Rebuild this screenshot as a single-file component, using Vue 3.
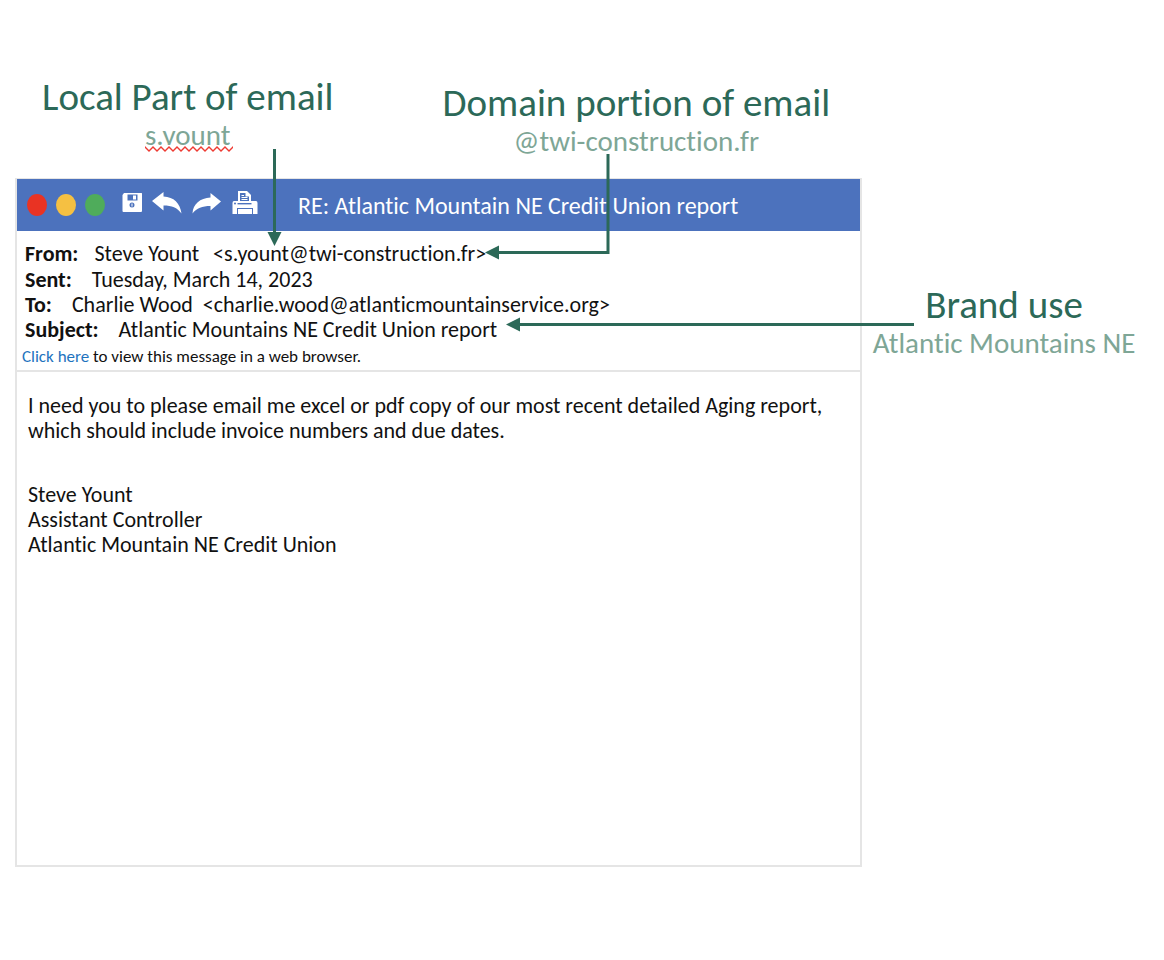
<template>
    <div class="diagram">
        <div class="callouts">
            <div class="callout local">
                <h2>Local Part of email</h2>
                <p class="misspelt">
                    <span>s.yount</span>
                    <svg class="wave" aria-hidden="true">
                        <defs>
                            <pattern id="zigzag" width="8" height="6" patternUnits="userSpaceOnUse">
                                <path d="M-1 0 L0 1 L4 5 L8 1 L9 0" fill="none" stroke="#ee3a32" stroke-width="1.4" />
                            </pattern>
                        </defs>
                        <rect width="100%" height="6" fill="url(#zigzag)" />
                    </svg>
                </p>
            </div>
            <div class="callout domain">
                <h2>Domain portion of email</h2>
                <p>@twi-construction.fr</p>
            </div>
        </div>
        <main class="mail">
            <header class="bar">
                <div class="lights">
                    <button v-for="item in lights" :key="item" :class="item" :aria-label="item"></button>
                </div>
                <div class="tools">
                    <button aria-label="Save">
                        <svg width="20" height="20" viewBox="0 0 20 20">
                            <path fill="#fff" fill-rule="evenodd" d="M2 0H19.500Q20 0 20 .5V18Q20 19 19 19H1.500Q.5 19 .5 18V2ZM5.500 1.500V7.500H15.500V1.500ZM10 9.500A2.500 2.500 0 1 0 10 14.500A2.500 2.500 0 1 0 10 9.500Z" />
                            <path fill="#fff" d="M11 2.500h3v4h-3zM9.500 10.500h1v3h-1z" />
                        </svg>
                    </button>
                    <button aria-label="Reply">
                        <svg width="30" height="22" viewBox="0 0 30 22">
                            <path fill="#fff" d="M0 9 L11.500 0 V4.500 C22 5 28 11 29.500 21.500 C25 15.500 20 13.500 11.500 13.500 V18.500 Z" />
                        </svg>
                    </button>
                    <button aria-label="Forward">
                        <svg width="30" height="22" viewBox="0 0 30 22">
                            <path fill="#fff" d="M29 9.500 L18.500 1 V5.500 C8 6 1 12 .5 21.500 C5 16 10 14 18.500 14 V18.500 Z" />
                        </svg>
                    </button>
                    <button aria-label="Print">
                        <svg width="26" height="24" viewBox="0 0 26 24">
                            <path fill="#fff" fill-rule="evenodd" d="M6 0H15L19 4V10H24Q25.500 10 25.500 12V23H21V17H5V23H.5V12Q.5 10 2 10H6ZM8 2V10H17V5.500H13.500V2Z" />
                            <path fill="none" stroke="#fff" d="M9.500 4.500h2.500M9.500 6.500h6M9.500 8.500h6" />
                            <path fill="none" stroke="#4c72bd" stroke-width="1.400" d="M5.500 12.700H19.500" />
                            <path fill="#fff" d="M6 18h14V23H6z" />
                            <circle cx="3" cy="12.500" r="1" fill="#4c72bd" />
                        </svg>
                    </button>
                </div>
                <h1>RE: Atlantic Mountain NE Credit Union report</h1>
            </header>
            <section class="head">
                <dl>
                    <div v-for="item in fields" :key="item.label" :class="item.name">
                        <dt>{{ item.label }}</dt>
                        <dd>{{ item.value }} <span v-if="item.address">{{ item.address }}</span></dd>
                    </div>
                </dl>
                <p class="browser"><a href="#">Click here</a> to view this message in a web browser.</p>
            </section>
            <section class="body">
                <p>I need you to please email me excel or pdf copy of our most recent detailed Aging report,<br>
                    which should include invoice numbers and due dates.</p>
                <p class="sign">Steve Yount<br>Assistant Controller<br>Atlantic Mountain NE Credit Union</p>
            </section>
            <!-- arrows from the callouts to the header fields -->
            <svg class="arrows" aria-hidden="true">
                <g fill="none" stroke="#2c6958" stroke-width="3">
                    <path d="M259.500 -30V55" />
                    <path d="M593 -25V73.500H480" />
                    <path d="M899 145.500H500" />
                </g>
                <g fill="#2c6958">
                    <path d="M252.500 53H266.500L259.500 67Z" />
                    <path d="M484 66.500V80.500L470 73.500Z" />
                    <path d="M505 138.500V152.500L491 145.500Z" />
                </g>
            </svg>
        </main>
        <aside class="callout brand">
            <h2>Brand use</h2>
            <p>Atlantic Mountains NE</p>
        </aside>
    </div>
</template>
<script setup>
import { ref } from 'vue'
let lights = ref(['red', 'yellow', 'green'])
let fields = ref([
    { name: 'from', label: 'From:', value: 'Steve Yount', address: '<s.yount@twi-construction.fr>' },
    { name: 'sent', label: 'Sent:', value: 'Tuesday, March 14, 2023' },
    { name: 'to', label: 'To:', value: 'Charlie Wood', address: '<charlie.wood@atlanticmountainservice.org>' },
    { name: 'subject', label: 'Subject:', value: 'Atlantic Mountains NE Credit Union report' }
])
</script>
<style>
body {
    margin: 0;
    background: #fff;
}
</style>
<style scoped>
.diagram {
    display: grid;
    grid-template-columns: minmax(0, 1fr) 264px;
    column-gap: 10px;
    padding: 76px 28px 92px 15px;
    font-family: Carlito, Lato, sans-serif;
    font-variant-ligatures: none;
    color: #111;
}

h1,
h2,
p,
dl,
dd {
    margin: 0;
    font-weight: 400;
}

button {
    padding: 0;
    border: 0;
    background: none;
}

.callouts {
    grid-column: 1 / 3;
    display: flex;
    align-items: flex-start;
    height: 102px;
}

.callout {
    text-align: center;
    white-space: nowrap;

    >h2 {
        font-size: 39px;
        line-height: 42px;
        color: #2c6958;
    }

    >p {
        font-size: 29px;
        line-height: 34px;
        color: #7ea696;
    }
}

.local {
    margin-left: 27px;
}

.domain {
    margin: 6px 0 0 109px;
}

.brand {
    padding-top: 106px;
}

.misspelt {
    position: relative;
    width: fit-content;
    margin: 0 auto;

    /* the descender is cut off above the spelling mark */
    >span {
        display: block;
        clip-path: inset(0 0 7px 0);
    }
}

.wave {
    position: absolute;
    left: 0;
    bottom: 0;
    width: 88px;
    height: 6px;
}

.mail {
    position: relative;
    border: 2px solid #e5e5e5;
    border-top-width: 1px;
    font-size: 22px;
    line-height: 25px;
}

.bar {
    display: flex;
    align-items: center;
    height: 52px;
    background: #4c72bd;
    color: #fff;

    >h1 {
        margin-left: 40px;
        font-size: 24px;
    }
}

.lights {
    display: flex;
    gap: 9px;
    margin-left: 10px;

    >button {
        width: 20px;
        height: 22px;
        border-radius: 50%;
    }

    .red {
        background: #e93323;
    }

    .yellow {
        background: #f5c042;
    }

    .green {
        background: #4fac5b;
    }
}

.tools {
    display: flex;
    align-items: center;
    gap: 10px;
    margin: 0 0 4px 17px;

    svg {
        display: block;
    }
}

.head {
    padding: 10px 5px 1px;
    border-bottom: 2px solid #e5e5e5;

    dl {
        padding-left: 3px;
    }

    dl>div {
        display: flex;
        gap: 20px;
    }

    dt {
        font-weight: 700;
    }

    dd>span {
        margin-left: 9px;
    }

    .from {
        gap: 16px;
        padding-bottom: 1px;
    }

    .to dd>span {
        margin-left: 5px;
    }
}

.browser {
    margin-top: 2px;
    font-size: 17px;

    >a {
        color: #1e73be;
        text-decoration: none;
    }
}

.body {
    min-height: 472px;
    padding: 21px 11px 0;
}

.sign {
    margin-top: 39px;
}

.arrows {
    position: absolute;
    left: -2px;
    top: 0;
    width: 100%;
    height: 100%;
    overflow: visible;
    pointer-events: none;
}
</style>
